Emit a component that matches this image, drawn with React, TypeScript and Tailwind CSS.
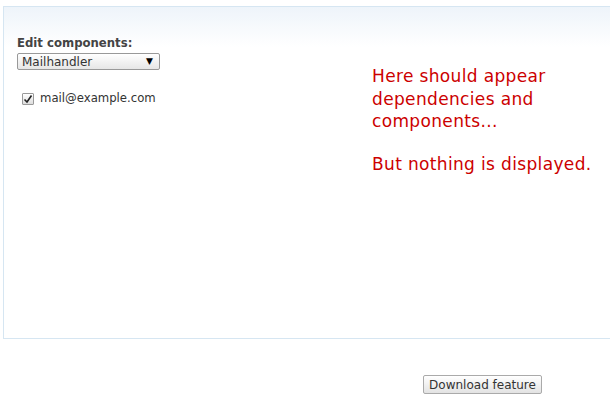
export default function App() {
  return (
    <div className="w-[610px] h-[403px] bg-white overflow-hidden font-['DejaVu_Sans',sans-serif] text-[#333]">
      <div className="pt-[6px] pl-[3px]">
        {/* Panel */}
        <div className="h-[333px] border-t border-l border-b border-[#d6e6f2] bg-gradient-to-b from-[#eef4fa] via-white via-[40px] to-white flex">
          <div className="w-[368px] pl-[13px] pt-[29px]">
            <div className="text-[11.7px] font-bold text-[#444] leading-[14px]">Edit components:</div>
            <div className="mt-[3px] w-[143px] h-[17px] border border-[#999] rounded-[2px] bg-gradient-to-b from-white to-[#e6e6e6] flex items-center justify-between pl-[4px] pr-[6px]">
              <span className="text-[12px] text-[#333] leading-none">Mailhandler</span>
              <span className="text-[9px] text-black leading-none">▼</span>
            </div>
            <label className="mt-[20px] ml-[5px] flex items-center gap-[6px]">
              <span className="w-[12px] h-[12px] border border-[#999] rounded-[1px] bg-gradient-to-b from-white to-[#ddd] flex items-center justify-center">
                <svg width="10" height="10" viewBox="0 0 10 10">
                  <path d="M1.5 5.5 L4 8 L8.5 1.5" stroke="#222" strokeWidth="1.6" fill="none" />
                </svg>
              </span>
              <span className="text-[11.7px] text-[#333]">mail@example.com</span>
            </label>
          </div>
          <div className="pt-[58px] text-[17px] leading-[22.5px] tracking-[0.35px] text-[#cc0000]">
            <p>Here should appear</p>
            <p>dependencies and</p>
            <p>components...</p>
            <p className="mt-[20px]">But nothing is displayed.</p>
          </div>
        </div>
      </div>
      <div className="flex pl-[423px] pt-[36px]">
        <button className="h-[19px] w-[119px] border border-[#aaa] rounded-[2px] bg-gradient-to-b from-white to-[#e3e3e3] text-[12px] text-[#333] leading-none">
          Download feature
        </button>
      </div>
    </div>
  );
}
